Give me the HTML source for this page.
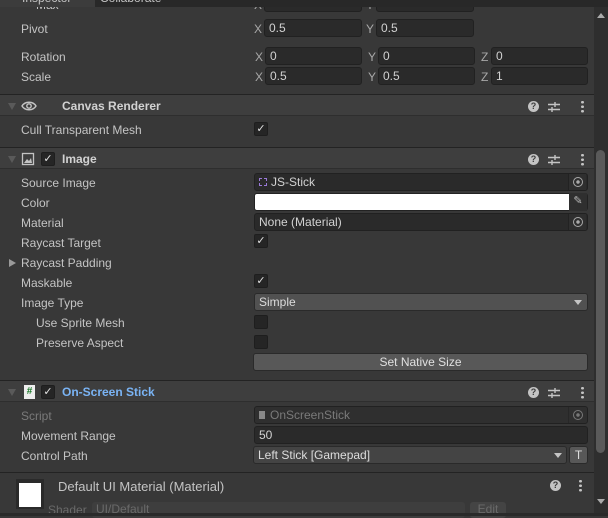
<!DOCTYPE html>
<html><head><meta charset="utf-8"><style>
*{box-sizing:border-box;margin:0;padding:0}
body{width:608px;height:516px;overflow:hidden;background:#383838;font-family:"Liberation Sans",sans-serif;font-size:12px;color:#c4c4c4;position:relative}
.a{position:absolute}
.lbl{position:absolute;left:21px;line-height:14px}
.f{position:absolute;height:18px;background:#2a2a2a;border:1px solid #212121;border-radius:3px;color:#d2d2d2;padding-left:4px;line-height:16px}
.ax{position:absolute;color:#a8a8a8;line-height:14px}
.hdr{position:absolute;left:0;width:594px;height:22px;background:#3e3e3e;border-top:1px solid #232323;border-bottom:1px solid #2e2e2e}
.hdr .t{position:absolute;top:4px;font-weight:bold;color:#d2d2d2;font-size:12px}
.tri{position:absolute;left:8px;top:8px;width:0;height:0;border-left:4px solid transparent;border-right:4px solid transparent;border-top:7px solid #5a5a5a}
.cb{position:absolute;width:14px;height:14px;background:#252525;border:1px solid #1e1e1e;border-radius:2px;color:#e0e0e0;font-size:11px;line-height:12px;text-align:center}
.icons{position:absolute;right:10px;top:5px;width:56px;height:14px}
.q{position:absolute;left:0;top:1px;width:11px;height:11px;border-radius:50%;background:#c4c4c4;color:#3e3e3e;font-size:9px;font-weight:bold;text-align:center;line-height:11px}
.dots{position:absolute;right:0;top:0;width:3px;height:13px;background:radial-gradient(circle,#c4c4c4 1.3px,transparent 1.5px) 0 0/3px 4.5px repeat-y}
.obj{position:absolute;right:1px;top:0;width:18px;height:16px;border-left:1px solid #222;background:#2f2f2f}
.obj::after{content:"";position:absolute;left:4px;top:3px;width:8px;height:8px;border:1px solid #aaa;border-radius:50%;background:radial-gradient(circle,#aaa 1.5px,transparent 2px)}
</style></head><body>
<div class="lbl" style="left:36px;top:-2px">Max</div>
<div class="ax" style="left:254px;top:-2px">X</div><div class="f" style="left:264px;top:-6px;width:98px">0.5</div>
<div class="ax" style="left:366px;top:-2px">Y</div><div class="f" style="left:376px;top:-6px;width:98px">0.5</div>
<!-- tab bar -->
<div class="a" style="left:0;top:0;width:608px;height:7px;background:#282828;overflow:hidden">
<div class="a" style="left:0;top:0;width:95px;height:7px;background:#3c3c3c"></div>
<div class="a" style="left:100px;top:-9px;color:#c4c4c4">Collaborate</div>
<div class="a" style="left:22px;top:-9px;color:#c4c4c4">Inspector</div>
</div>

<div class="lbl" style="top:22px">Pivot</div>
<div class="ax" style="left:254px;top:22px">X</div><div class="f" style="left:264px;top:19px;width:98px">0.5</div>
<div class="ax" style="left:366px;top:22px">Y</div><div class="f" style="left:376px;top:19px;width:98px">0.5</div>

<div class="lbl" style="top:50px">Rotation</div>
<div class="ax" style="left:255px;top:50px">X</div><div class="f" style="left:265px;top:47px;width:97px">0</div>
<div class="ax" style="left:368px;top:50px">Y</div><div class="f" style="left:378px;top:47px;width:97px">0</div>
<div class="ax" style="left:481px;top:50px">Z</div><div class="f" style="left:491px;top:47px;width:97px">0</div>
<div class="lbl" style="top:70px">Scale</div>
<div class="ax" style="left:255px;top:70px">X</div><div class="f" style="left:265px;top:67px;width:97px">0.5</div>
<div class="ax" style="left:368px;top:70px">Y</div><div class="f" style="left:378px;top:67px;width:97px">0.5</div>
<div class="ax" style="left:481px;top:70px">Z</div><div class="f" style="left:491px;top:67px;width:97px">1</div>

<!-- Canvas Renderer -->
<div class="hdr" style="top:94px">
 <div class="tri"></div>
 <svg class="a" style="left:21px;top:5px" width="16" height="12" viewBox="0 0 16 12"><path d="M1 6C4 1 12 1 15 6C12 11 4 11 1 6Z" fill="none" stroke="#c4c4c4" stroke-width="1.4"/><circle cx="8" cy="6" r="2.2" fill="none" stroke="#c4c4c4" stroke-width="1.4"/></svg>
 <div class="t" style="left:62px">Canvas Renderer</div>
 <div class="icons"><div class="q">?</div><svg class="a" style="left:20px;top:0" width="12" height="13" viewBox="0 0 12 13"><path d="M0 4.5H12M0 9.5H12M7 2V7M4 7V12" stroke="#c4c4c4" stroke-width="1.4"/></svg><div class="dots"></div></div>
</div>
<div class="lbl" style="top:123px">Cull Transparent Mesh</div>
<div class="cb" style="left:254px;top:122px">✓</div>

<!-- Image -->
<div class="hdr" style="top:147px">
 <div class="tri"></div>
 <svg class="a" style="left:21px;top:4px" width="14" height="14" viewBox="0 0 14 14"><rect x="1.5" y="1.5" width="11" height="11" fill="none" stroke="#c4c4c4" stroke-width="1.3"/><path d="M3 11L6 7L8 9L10 6L11 11Z" fill="#c4c4c4"/></svg>
 <div class="cb" style="left:41px;top:4px">✓</div>
 <div class="t" style="left:62px">Image</div>
 <div class="icons"><div class="q">?</div><svg class="a" style="left:20px;top:0" width="12" height="13" viewBox="0 0 12 13"><path d="M0 4.5H12M0 9.5H12M7 2V7M4 7V12" stroke="#c4c4c4" stroke-width="1.4"/></svg><div class="dots"></div></div>
</div>
<div class="lbl" style="top:176px">Source Image</div>
<div class="f" style="left:254px;top:173px;width:334px;padding-left:16px">JS-Stick<div class="obj"></div><div class="a" style="left:4px;top:4px;width:8px;height:8px;border:1px dashed #9a7ad8"></div></div>
<div class="lbl" style="top:196px">Color</div>
<div class="f" style="left:254px;top:193px;width:334px;background:#fff;border-color:#222"><div class="a" style="right:0;top:-1px;width:18px;height:18px;background:#2f2f2f;color:#bbb;text-align:center;font-size:11px">✎</div></div>
<div class="lbl" style="top:216px">Material</div>
<div class="f" style="left:254px;top:213px;width:334px">None (Material)<div class="obj"></div></div>
<div class="lbl" style="top:236px">Raycast Target</div>
<div class="cb" style="left:254px;top:234px">✓</div>
<div class="a" style="left:9px;top:259px;width:0;height:0;border-top:4px solid transparent;border-bottom:4px solid transparent;border-left:7px solid #9a9a9a"></div>
<div class="lbl" style="top:256px">Raycast Padding</div>
<div class="lbl" style="top:276px">Maskable</div>
<div class="cb" style="left:254px;top:274px">✓</div>
<div class="lbl" style="top:296px">Image Type</div>
<div class="f" style="left:254px;top:293px;width:334px;background:#515151;border-color:#2a2a2a;color:#ddd">Simple<div class="a" style="right:5px;top:6px;border-left:4px solid transparent;border-right:4px solid transparent;border-top:5px solid #c4c4c4"></div></div>
<div class="lbl" style="left:36px;top:316px">Use Sprite Mesh</div>
<div class="cb" style="left:254px;top:315px"></div>
<div class="lbl" style="left:36px;top:336px">Preserve Aspect</div>
<div class="cb" style="left:254px;top:335px"></div>
<div class="f" style="left:253px;top:353px;width:335px;background:#585858;border-color:#2a2a2a;text-align:center;color:#e0e0e0;padding:0">Set Native Size</div>

<!-- On-Screen Stick -->
<div class="hdr" style="top:380px">
 <div class="tri"></div>
 <div class="a" style="left:24px;top:4px;width:11px;height:14px;background:#eee;color:#1c7a2a;font-size:10px;font-weight:bold;text-align:center;line-height:14px">#</div>
 <div class="cb" style="left:41px;top:4px">✓</div>
 <div class="t" style="left:62px;color:#7ab4f5">On-Screen Stick</div>
 <div class="icons"><div class="q">?</div><svg class="a" style="left:20px;top:0" width="12" height="13" viewBox="0 0 12 13"><path d="M0 4.5H12M0 9.5H12M7 2V7M4 7V12" stroke="#c4c4c4" stroke-width="1.4"/></svg><div class="dots"></div></div>
</div>
<div class="lbl" style="top:409px;color:#7a7a7a">Script</div>
<div class="f" style="left:254px;top:406px;width:334px;background:#2f2f2f;color:#7a7a7a;padding-left:15px">OnScreenStick<div class="obj" style="opacity:.6"></div><div class="a" style="left:4px;top:4px;width:6px;height:8px;background:#888"></div></div>
<div class="lbl" style="top:429px">Movement Range</div>
<div class="f" style="left:254px;top:426px;width:334px">50</div>
<div class="lbl" style="top:449px">Control Path</div>
<div class="f" style="left:253px;top:446px;width:314px;background:#444;border-color:#2a2a2a;color:#ddd">Left Stick [Gamepad]<div class="a" style="right:4px;top:6px;border-left:4px solid transparent;border-right:4px solid transparent;border-top:5px solid #c4c4c4"></div></div>
<div class="f" style="left:569px;top:446px;width:19px;background:#585858;border-color:#2a2a2a;text-align:center;padding:0;color:#ddd">T</div>

<!-- material -->
<div class="a" style="left:0;top:472px;width:594px;height:1px;background:#232323"></div>
<div class="a" style="left:16px;top:479px;width:28px;height:30px;background:#2a2a2a"></div>
<div class="a" style="left:19px;top:483px;width:22px;height:24px;background:#fff"></div>
<div class="a" style="left:58px;top:479px;font-size:13px;color:#c4c4c4">Default UI Material (Material)</div>
<div class="a" style="left:550px;top:480px;width:11px;height:11px;border-radius:50%;background:#c4c4c4;color:#383838;font-size:9px;font-weight:bold;text-align:center;line-height:11px">?</div>
<div class="dots" style="left:579px;top:479px;right:auto"></div>
<div class="a" style="left:48px;top:503px;color:#6a6a6a">Shader</div>
<div class="a" style="left:92px;top:502px;width:373px;height:16px;background:#3e3e3e;border-radius:3px;color:#6a6a6a;padding-left:4px">UI/Default</div>
<div class="a" style="left:470px;top:502px;width:36px;height:16px;background:#444;border-radius:3px;color:#6a6a6a;text-align:center">Edit</div>
<div class="a" style="left:0;top:513px;width:608px;height:3px;background:#2a2a2a"></div>

<!-- scrollbar -->
<div class="a" style="left:594px;top:7px;width:14px;height:506px;background:#2e2e2e"></div>
<div class="a" style="left:597px;top:13px;border-left:4px solid transparent;border-right:4px solid transparent;border-bottom:5px solid #aaa"></div>
<div class="a" style="left:596px;top:150px;width:9px;height:303px;background:#5a5a5a;border-radius:5px"></div>
<div class="a" style="left:597px;top:499px;border-left:4px solid transparent;border-right:4px solid transparent;border-top:5px solid #aaa"></div>
</body></html>
